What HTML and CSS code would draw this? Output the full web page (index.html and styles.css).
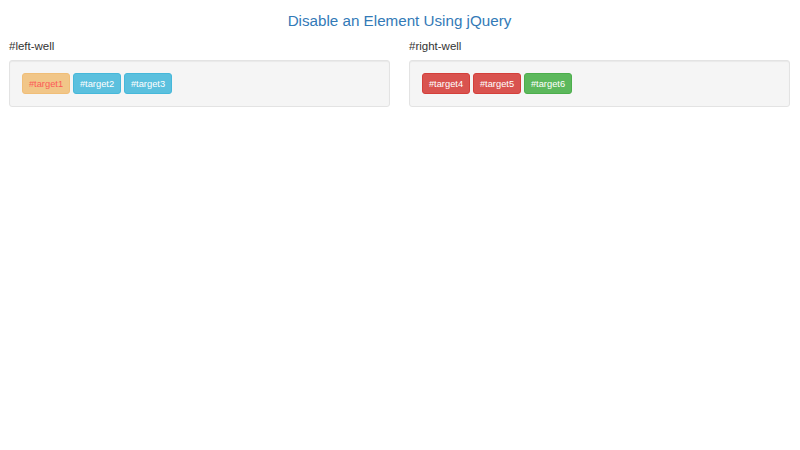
FILE: index.html
```html
<!DOCTYPE html>
<html lang="en">
<head>
  <meta charset="UTF-8" />
  <title>Disable an Element Using jQuery</title>
  <link rel="stylesheet" href="styles.css">
</head>
<body>
  <div class="container-fluid">
    <h3 class="text-primary">Disable an Element Using jQuery</h3>
    <div class="row">
      <div class="col">
        <h4>#left-well</h4>
        <div class="well" id="left-well">
          <button class="btn btn-warning" id="target1" disabled>#target1</button>
          <button class="btn btn-info" id="target2">#target2</button>
          <button class="btn btn-info" id="target3">#target3</button>
        </div>
      </div>
      <div class="col">
        <h4>#right-well</h4>
        <div class="well" id="right-well">
          <button class="btn btn-danger" id="target4">#target4</button>
          <button class="btn btn-danger" id="target5">#target5</button>
          <button class="btn btn-success" id="target6">#target6</button>
        </div>
      </div>
    </div>
  </div>
</body>
</html>
```

FILE: styles.css
```css
* {
  box-sizing: border-box;
}
body {
  margin: 0;
  font-family: "Liberation Sans", Arial, sans-serif;
  color: #333;
  background: #fff;
}
.container-fluid {
  padding: 11px 10px 0 9px;
}
h3 {
  margin: 0 0 8px;
  font-size: 15.2px;
  font-weight: normal;
  text-align: center;
  line-height: 20px;
}
.text-primary {
  color: #337ab7;
}
.row {
  display: flex;
  gap: 19px;
}
.col {
  flex: 1;
}
h4 {
  margin: 0 0 7px;
  font-size: 11.5px;
  font-weight: normal;
  line-height: 14px;
}
.well {
  display: flex;
  gap: 3px;
  min-height: 46px;
  padding: 12px 12px;
  background: #f5f5f5;
  border: 1px solid #e3e3e3;
  border-radius: 3px;
  box-shadow: inset 0 1px 1px rgba(0, 0, 0, .05);
}
.btn {
  height: 21px;
  width: 48px;
  padding: 0;
  font-family: inherit;
  font-size: 9.3px;
  color: #fff;
  border: 1px solid transparent;
  border-radius: 3px;
  cursor: pointer;
}
.btn[disabled] {
  opacity: .65;
  cursor: not-allowed;
}
.btn-warning {
  background: #f0ad4e;
  border-color: #eea236;
}
#target1 {
  color: red;
}
.btn-info {
  background: #5bc0de;
  border-color: #46b8da;
}
.btn-danger {
  background: #d9534f;
  border-color: #d43f3a;
}
.btn-success {
  background: #5cb85c;
  border-color: #4cae4c;
}
```
